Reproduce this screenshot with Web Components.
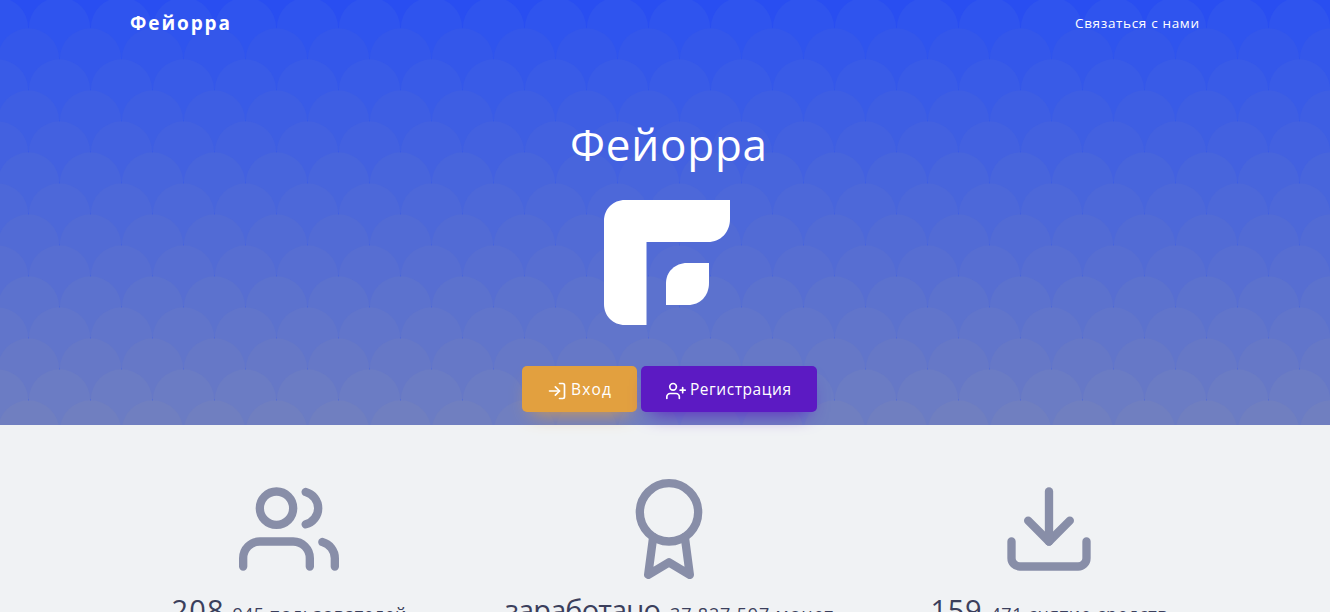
<!DOCTYPE html>
<html lang="ru">
<head>
<meta charset="utf-8">
<title>Фейорра</title>
<style>
  html, body {
    margin: 0;
    height: 100%;
    overflow: hidden;
    background: #f0f2f4;
    font-family: "Open Sans", "Noto Sans", sans-serif;
  }
</style>
</head>
<body>
<landing-page></landing-page>

<script>
const ICONS = {
    'log-in': '<path d="M15 3h4a2 2 0 0 1 2 2v14a2 2 0 0 1-2 2h-4"/><polyline points="10 17 15 12 10 7"/><line x1="15" y1="12" x2="3" y2="12"/>',
    'user-plus': '<path d="M16 21v-2a4 4 0 0 0-4-4H5a4 4 0 0 0-4 4v2"/><circle cx="8.5" cy="7" r="4"/><line x1="20" y1="8" x2="20" y2="14"/><line x1="23" y1="11" x2="17" y2="11"/>',
    'users': '<path d="M17 21v-2a4 4 0 0 0-4-4H5a4 4 0 0 0-4 4v2"/><circle cx="9" cy="7" r="4"/><path d="M23 21v-2a4 4 0 0 0-3-3.87"/><path d="M16 3.13a4 4 0 0 1 0 7.75"/>',
    'award': '<circle cx="12" cy="8" r="7"/><polyline points="8.21 13.89 7 23 12 20 17 23 15.79 13.88"/>',
    'download': '<path d="M21 15v4a2 2 0 0 1-2 2H5a2 2 0 0 1-2-2v-4"/><polyline points="7 10 12 15 17 10"/><line x1="12" y1="15" x2="12" y2="3"/>'
};

class FeatherIcon extends HTMLElement {
    constructor() {
        super();
        this.attachShadow({ mode: 'open' });
    }

    connectedCallback() {
        this.shadowRoot.innerHTML = `
      <style>
        :host {
          display: block;
          width: var(--icon-size, 20px);
          height: var(--icon-size, 20px);
          flex-shrink: 0;
        }

        svg {
          display: block;
          width: 100%;
          height: 100%;
        }
      </style>
      <svg viewBox="0 0 24 24" fill="none" stroke="currentColor" stroke-width="2"
           stroke-linecap="round" stroke-linejoin="round">${ICONS[this.getAttribute('name')]}</svg>
    `;
    }
}

// text stretched to a fixed width, letters and gaps together
class FitText extends HTMLElement {
    constructor() {
        super();
        this.attachShadow({ mode: 'open' }).innerHTML = `
      <style>
        :host {
          display: block;
          white-space: nowrap;
        }

        span {
          display: inline-block;
        }
      </style>
      <span><slot></slot></span>
    `;
    }

    connectedCallback() {
        const width = parseFloat(this.getAttribute('width'));
        const span = this.shadowRoot.querySelector('span');
        const count = this.textContent.length;
        this.style.width = `${width}px`;
        span.style.letterSpacing = '0';
        const natural = span.getBoundingClientRect().width;
        span.style.letterSpacing = `${(width - natural) / (count - 1)}px`;
    }
}

class ScallopPattern extends HTMLElement {
    constructor() {
        super();
        this.attachShadow({ mode: 'open' });
    }

    connectedCallback() {
        const top = [47, 84, 238];
        const bottom = [112, 127, 192];
        const rows = 14;
        let circles = '';

        for (let r = 0; r < rows; r++) {
            const t = r / (rows - 1);
            const fill = top.map((c, i) => Math.round(c + (bottom[i] - c) * t));
            const start = r % 2 ? 28.5 : -2.5;
            for (let x = start; x < 1400; x += 62) {
                circles += `<circle cx="${x}" cy="${28 + r * 31}" r="30.7" fill="rgb(${fill})"/>`;
            }
        }

        this.shadowRoot.innerHTML = `
      <style>
        :host {
          display: block;
          background: #294ef1;
        }

        svg {
          display: block;
          width: 100%;
          height: 100%;
        }
      </style>
      <svg viewBox="0 0 1330 425" preserveAspectRatio="xMinYMin slice">${circles}</svg>
    `;
    }
}

class SiteHeader extends HTMLElement {
    constructor() {
        super();
        this.attachShadow({ mode: 'open' }).innerHTML = `
      <style>
        :host {
          display: flex;
          justify-content: space-between;
          align-items: center;
          height: 46px;
          padding: 0 131px 0 130px;
          color: #fff;
        }

        .brand {
          font-size: 19px;
          font-weight: 700;
          line-height: 44px;
        }

        .link {
          font-size: 13.5px;
        }
      </style>
      <fit-text class="brand" width="100">Фейорра</fit-text>
      <fit-text class="link" width="124">Связаться с нами</fit-text>
    `;
    }
}

class ActionButton extends HTMLElement {
    constructor() {
        super();
        this.attachShadow({ mode: 'open' });
    }

    connectedCallback() {
        this.shadowRoot.innerHTML = `
      <style>
        :host {
          display: flex;
          box-sizing: border-box;
          height: 46px;
          padding: 0 26px 0 25px;
          gap: 4px;
          border-radius: 5px;
          color: #fff;
          font-size: 15.5px;
          line-height: 46px;
          background: var(--button-color);
          box-shadow: 0 10px 20px -10px var(--button-color);
        }

        feather-icon {
          margin-top: 15px;
        }
      </style>
      <feather-icon name="${this.getAttribute('icon')}"></feather-icon>
      <slot></slot>
    `;
    }
}

class HeroBanner extends HTMLElement {
    constructor() {
        super();
        this.attachShadow({ mode: 'open' }).innerHTML = `
      <style>
        :host {
          display: grid;
          height: 425px;
        }

        scallop-pattern, .content {
          grid-area: 1 / 1;
          min-height: 0;
        }

        .content {
          z-index: 1;
          display: flex;
          flex-direction: column;
          height: 425px;
        }

        .title {
          align-self: center;
          margin: 68px 0 0 7px;
          color: #fff;
          font-size: 44px;
          font-weight: 400;
          line-height: 60px;
        }

        .logo {
          display: block;
          align-self: center;
          width: 127px;
          height: 127px;
          margin: 25px 0 0 3px;
        }

        .actions {
          display: flex;
          gap: 4px;
          align-self: center;
          margin: 40px 0 0 9px;
        }

        .enter {
          --button-color: #e2a03f;
        }

        .register {
          --button-color: #5c1ac3;
        }
      </style>
      <scallop-pattern></scallop-pattern>
      <div class="content">
        <site-header></site-header>
        <fit-text class="title" width="197">Фейорра</fit-text>
        <svg class="logo" viewBox="0 0 127 127" fill="#fff">
          <path d="M22 1H127V20C127 33 118 43 105 43H43.500V126H22C10 126 1 117 1 105V22C1 10 10 1 22 1Z"/>
          <path d="M84 64H106V84C106 97 97 106 85 106H63V84C63 73 72 64 84 64Z"/>
        </svg>
        <div class="actions">
          <action-button class="enter" icon="log-in"><fit-text width="40">Вход</fit-text></action-button>
          <action-button class="register" icon="user-plus"><fit-text width="101">Регистрация</fit-text></action-button>
        </div>
      </div>
    `;
    }
}

class StatCounter extends HTMLElement {
    constructor() {
        super();
        this.attachShadow({ mode: 'open' });
    }

    connectedCallback() {
        this.shadowRoot.innerHTML = `
      <style>
        :host {
          display: flex;
          flex-direction: column;
          align-items: center;
          --icon-size: 100px;
        }

        feather-icon {
          color: #888ea8;
        }

        .text {
          display: flex;
          align-items: baseline;
          gap: 9px;
          margin-top: 11px;
          color: #3b3f5c;
          line-height: 40px;
        }

        ::slotted([slot="lead"]) {
          font-size: 29px;
        }

        ::slotted([slot="rest"]) {
          font-size: 18px;
        }
      </style>
      <feather-icon name="${this.getAttribute('icon')}"></feather-icon>
      <div class="text"><slot name="lead"></slot><slot name="rest"></slot></div>
    `;
    }
}

class LandingPage extends HTMLElement {
    constructor() {
        super();
        this.attachShadow({ mode: 'open' }).innerHTML = `
      <style>
        :host {
          display: block;
          height: 612px;
          overflow: hidden;
        }

        .stats {
          display: grid;
          grid-template-columns: repeat(3, 380px);
          justify-content: center;
          padding: 54px 0 0 8px;
        }
      </style>
      <hero-banner></hero-banner>
      <div class="stats">
        <stat-counter icon="users">
          <fit-text slot="lead" width="52">208</fit-text>
          <fit-text slot="rest" width="174">945 пользователей</fit-text>
        </stat-counter>
        <stat-counter icon="award">
          <fit-text slot="lead" width="156">заработано</fit-text>
          <fit-text slot="rest" width="163">37 827 597 монет</fit-text>
        </stat-counter>
        <stat-counter icon="download">
          <fit-text slot="lead" width="51">159</fit-text>
          <fit-text slot="rest" width="177">471 снятие средств</fit-text>
        </stat-counter>
      </div>
    `;
    }
}

customElements.define('feather-icon', FeatherIcon);
customElements.define('fit-text', FitText);
customElements.define('scallop-pattern', ScallopPattern);
customElements.define('site-header', SiteHeader);
customElements.define('action-button', ActionButton);
customElements.define('hero-banner', HeroBanner);
customElements.define('stat-counter', StatCounter);
customElements.define('landing-page', LandingPage);
</script>
</body>
</html>
